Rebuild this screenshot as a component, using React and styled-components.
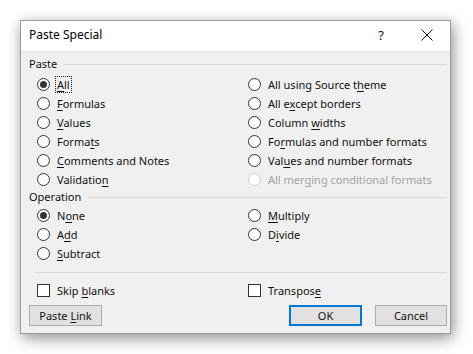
import React from "react";
import styled, { createGlobalStyle } from "styled-components";

const GlobalStyle = createGlobalStyle`
  html, body {
    margin: 0;
    padding: 0;
    background: #ffffff;
  }
  body {
    font-family: "Noto Sans", "Open Sans", sans-serif;
    font-size: 11px;
    color: #111;
  }
`;

const Page = styled.div`
  width: 473px;
  height: 354px;
  padding: 20px 0 0 20px;
  box-sizing: border-box;
`;

const Dialog = styled.div`
  width: 431px;
  height: 314px;
  box-sizing: border-box;
  border: 1px solid #9a9a9a;
  background: #f0f0f0;
  box-shadow: 2px 4px 14px rgba(0, 0, 0, 0.45);
  display: flex;
  flex-direction: column;
`;

const TitleBar = styled.div`
  height: 30px;
  background: #ffffff;
  display: flex;
  align-items: center;
  padding-left: 8px;
  border-bottom: 1px solid #e6e6e6;
`;

const Title = styled.div`
  flex: 1;
  font-size: 12px;
  color: #000;
  margin-top: -3px;
`;

const TitleButton = styled.div`
  width: ${({ w }) => w}px;
  height: 30px;
  display: flex;
  align-items: center;
  justify-content: center;
  color: #111;
  font-size: 13px;
  margin-top: -3px;
`;

const Body = styled.div`
  flex: 1;
  display: flex;
  flex-direction: column;
  padding: 4px 3px 0 8px;
  white-space: nowrap;
`;

const GroupHeader = styled.div`
  display: flex;
  align-items: center;
  height: 16px;
  line-height: 16px;
`;

const GroupLine = styled.div`
  flex: 1;
  height: 1px;
  background: #dadada;
  margin-left: 7px;
`;

const OptionGrid = styled.div`
  display: grid;
  grid-template-columns: 211px 1fr;
  grid-auto-rows: 19px;
  margin: ${({ top }) => top}px 0 0 8px;
`;

const Option = styled.div`
  display: flex;
  align-items: center;
  color: ${({ disabled }) => (disabled ? "#a3a3a3" : "#111")};
`;

const Radio = styled.span`
  width: 13px;
  height: 13px;
  box-sizing: border-box;
  border-radius: 50%;
  border: 1px solid ${({ disabled }) => (disabled ? "#cfcfcf" : "#333")};
  background: #fff;
  display: flex;
  align-items: center;
  justify-content: center;
  margin-right: 7px;
  flex-shrink: 0;

  &::after {
    content: "";
    width: 7px;
    height: 7px;
    border-radius: 50%;
    background: #333;
    display: ${({ checked }) => (checked ? "block" : "none")};
  }
`;

const Check = styled.span`
  width: 13px;
  height: 13px;
  box-sizing: border-box;
  border: 1px solid #333;
  background: #fff;
  margin-right: 7px;
  flex-shrink: 0;
`;

const Label = styled.span`
  line-height: 15px;
  padding: 0 1px;
  margin-left: -1px;
  outline: ${({ focused }) => (focused ? "1px dotted #222" : "none")};
`;

const Key = styled.u`
  text-decoration-thickness: 1px;
  text-underline-offset: 2px;
`;

const Separator = styled.div`
  height: 1px;
  background: #dadada;
  margin: 9px 0 0 6px;
`;

const ButtonRow = styled.div`
  display: flex;
  align-items: center;
  margin-top: 5px;
`;

const Button = styled.div`
  width: ${({ w }) => w || 73}px;
  height: 21px;
  box-sizing: border-box;
  background: #e1e1e1;
  border: ${({ primary }) => (primary ? "2px solid #0078d7" : "1px solid #adadad")};
  display: flex;
  align-items: center;
  justify-content: center;
  color: #111;
  margin-left: ${({ ml }) => ml || 0}px;
`;

const Spacer = styled.div`
  flex: 1;
`;

const CloseIcon = () => (
  <svg width="12" height="12" viewBox="0 0 12 12">
    <path d="M0.5 0.5 L11.5 11.5 M11.5 0.5 L0.5 11.5" stroke="#111" strokeWidth="1" fill="none" />
  </svg>
);

const u = (before, key, after) => (
  <span>
    {before}
    <Key>{key}</Key>
    {after}
  </span>
);

const pasteOptions = [
  [{ text: u("", "A", "ll"), checked: true, focused: true }, { text: u("All using Source t", "h", "eme") }],
  [{ text: u("", "F", "ormulas") }, { text: u("All e", "x", "cept borders") }],
  [{ text: u("", "V", "alues") }, { text: u("Column ", "w", "idths") }],
  [{ text: u("Forma", "t", "s") }, { text: u("Fo", "r", "mulas and number formats") }],
  [{ text: u("", "C", "omments and Notes") }, { text: u("Val", "u", "es and number formats") }],
  [{ text: u("Validatio", "n", "") }, { text: u("All mer", "g", "ing conditional formats"), disabled: true }],
];

const operationOptions = [
  [{ text: u("N", "o", "ne"), checked: true }, { text: u("", "M", "ultiply") }],
  [{ text: u("A", "d", "d") }, { text: u("D", "i", "vide") }],
  [{ text: u("", "S", "ubtract") }, null],
];

const renderRows = (rows) =>
  rows.flat().map((opt, i) =>
    opt ? (
      <Option key={i} disabled={opt.disabled}>
        <Radio checked={opt.checked} disabled={opt.disabled} />
        <Label focused={opt.focused}>{opt.text}</Label>
      </Option>
    ) : (
      <div key={i} />
    )
  );

export default function App() {
  return (
    <Page>
      <GlobalStyle />
      <Dialog>
        <TitleBar>
          <Title>Paste Special</Title>
          <TitleButton w={46}>?</TitleButton>
          <TitleButton w={46}>
            <CloseIcon />
          </TitleButton>
        </TitleBar>
        <Body>
          <GroupHeader>
            Paste
            <GroupLine />
          </GroupHeader>
          <OptionGrid top={3}>{renderRows(pasteOptions)}</OptionGrid>
          <GroupHeader>
            Operation
            <GroupLine />
          </GroupHeader>
          <OptionGrid top={1}>{renderRows(operationOptions)}</OptionGrid>
          <Separator />
          <OptionGrid top={8}>
            <Option>
              <Check />
              <Label>{u("Skip ", "b", "lanks")}</Label>
            </Option>
            <Option>
              <Check />
              <Label>{u("Transpos", "e", "")}</Label>
            </Option>
          </OptionGrid>
          <ButtonRow>
            <Button>{u("Paste ", "L", "ink")}</Button>
            <Spacer />
            <Button primary>OK</Button>
            <Button ml={13} w={72}>Cancel</Button>
          </ButtonRow>
        </Body>
      </Dialog>
    </Page>
  );
}
